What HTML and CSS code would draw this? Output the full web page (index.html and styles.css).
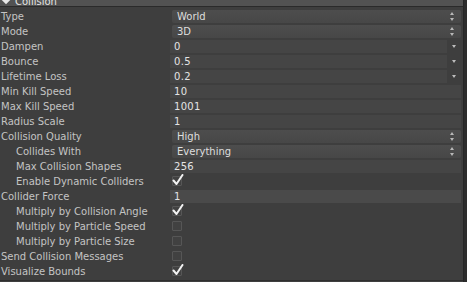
FILE: index.html
```html
<!DOCTYPE html>
<html>
<head>
<meta charset="utf-8">
<link rel="stylesheet" href="styles.css">
</head>
<body>
<div class="panel">
  <div class="header"><span class="hicon"></span><span class="htitle">Collision</span></div>
  <div class="rows">
    <div class="row"><div class="label">Type</div><div class="popup"><span>World</span><span class="updown"></span></div></div>
    <div class="row"><div class="label">Mode</div><div class="popup"><span>3D</span><span class="updown"></span></div></div>
    <div class="row"><div class="label">Dampen</div><div class="curve"><div class="num">0</div><span class="down"></span></div></div>
    <div class="row"><div class="label">Bounce</div><div class="curve"><div class="num">0.5</div><span class="down"></span></div></div>
    <div class="row"><div class="label">Lifetime Loss</div><div class="curve"><div class="num">0.2</div><span class="down"></span></div></div>
    <div class="row"><div class="label">Min Kill Speed</div><div class="num wide">10</div></div>
    <div class="row"><div class="label">Max Kill Speed</div><div class="num wide">1001</div></div>
    <div class="row"><div class="label">Radius Scale</div><div class="num wide">1</div></div>
    <div class="row"><div class="label">Collision Quality</div><div class="popup"><span>High</span><span class="updown"></span></div></div>
    <div class="row"><div class="label sub">Collides With</div><div class="popup"><span>Everything</span><span class="updown"></span></div></div>
    <div class="row"><div class="label sub">Max Collision Shapes</div><div class="num wide">256</div></div>
    <div class="row"><div class="label sub">Enable Dynamic Colliders</div><div class="check on"><svg viewBox="0 0 12 12" width="12" height="12"><polyline points="1.5,6.5 4.5,10 10.5,1" /></svg></div></div>
    <div class="row"><div class="label">Collider Force</div><div class="num wide hot">1</div></div>
    <div class="row"><div class="label sub">Multiply by Collision Angle</div><div class="check on"><svg viewBox="0 0 12 12" width="12" height="12"><polyline points="1.5,6.5 4.5,10 10.5,1" /></svg></div></div>
    <div class="row"><div class="label sub">Multiply by Particle Speed</div><div class="check"></div></div>
    <div class="row"><div class="label sub">Multiply by Particle Size</div><div class="check"></div></div>
    <div class="row"><div class="label">Send Collision Messages</div><div class="check"></div></div>
    <div class="row"><div class="label">Visualize Bounds</div><div class="check on"><svg viewBox="0 0 12 12" width="12" height="12"><polyline points="1.5,6.5 4.5,10 10.5,1" /></svg></div></div>
  </div>
</div>
</body>
</html>
```
FILE: styles.css
```css
html, body {
  margin: 0;
  padding: 0;
  background: #2c2c2c;
  width: 467px;
  height: 282px;
  overflow: hidden;
}
.panel {
  width: 463px;
  height: 282px;
  background: #3e3e3e;
  border-right: 1px solid #262626;
  font-family: "DejaVu Sans", "Liberation Sans", sans-serif;
  font-size: 10px;
  color: #c4c4c4;
  box-sizing: content-box;
}
.header {
  height: 6px;
  overflow: hidden;
  background: #525252;
  border-bottom: 1px solid #2a2a2a;
  display: flex;
  align-items: flex-end;
  gap: 6px;
  padding-left: 3px;
  color: #e4e4e4;
}
.hicon {
  width: 6px;
  height: 6px;
  background: #e8e8e8;
  transform: translateY(-3px) rotate(45deg);
  flex: none;
}
.htitle {
  line-height: 12px;
  margin-bottom: -2px;
}
.rows {
  padding-top: 3px;
  border-bottom: 1px solid #2e2e2e;
}
.row {
  height: 15px;
  display: flex;
  align-items: flex-start;
}
.label {
  width: 170px;
  flex: none;
  height: 13px;
  line-height: 13px;
  padding-left: 1px;
  box-sizing: border-box;
  white-space: nowrap;
}
.label.sub {
  padding-left: 16px;
}
.popup {
  margin-left: 2px;
  width: 289px;
  height: 13px;
  line-height: 13px;
  background: linear-gradient(#4d4d4d, #474747);
  border-radius: 2px;
  display: flex;
  justify-content: space-between;
  align-items: center;
  padding-left: 5px;
  padding-right: 6px;
  box-sizing: border-box;
  color: #dedede;
}
.updown {
  width: 5px;
  height: 9px;
  position: relative;
  flex: none;
}
.updown::before, .updown::after {
  content: "";
  position: absolute;
  left: 0;
  border-left: 2.5px solid transparent;
  border-right: 2.5px solid transparent;
}
.updown::before {
  top: 0;
  border-bottom: 3px solid #b8b8b8;
}
.updown::after {
  bottom: 0;
  border-top: 3px solid #b8b8b8;
}
.curve {
  display: flex;
  align-items: center;
  width: 291px;
}
.num {
  width: 277px;
  height: 13px;
  line-height: 13px;
  background: #454545;
  padding-left: 4px;
  box-sizing: border-box;
  color: #e4e4e4;
  letter-spacing: 0.3px;
}
.num.wide {
  width: 291px;
}
.num.hot {
  background: #4a4a4a;
}
.down {
  width: 0;
  height: 0;
  margin-left: 5px;
  border-left: 2.5px solid transparent;
  border-right: 2.5px solid transparent;
  border-top: 3px solid #bdbdbd;
}
.check {
  margin-left: 2px;
  width: 10px;
  height: 10px;
  margin-top: 1px;
  border: 1px solid #565656;
  background: #414141;
  border-radius: 1px;
  box-sizing: border-box;
  position: relative;
}
.check svg {
  position: absolute;
  left: -1px;
  top: -3px;
  fill: none;
  stroke: #f2f2f2;
  stroke-width: 2;
  stroke-linecap: round;
  stroke-linejoin: round;
}
```
